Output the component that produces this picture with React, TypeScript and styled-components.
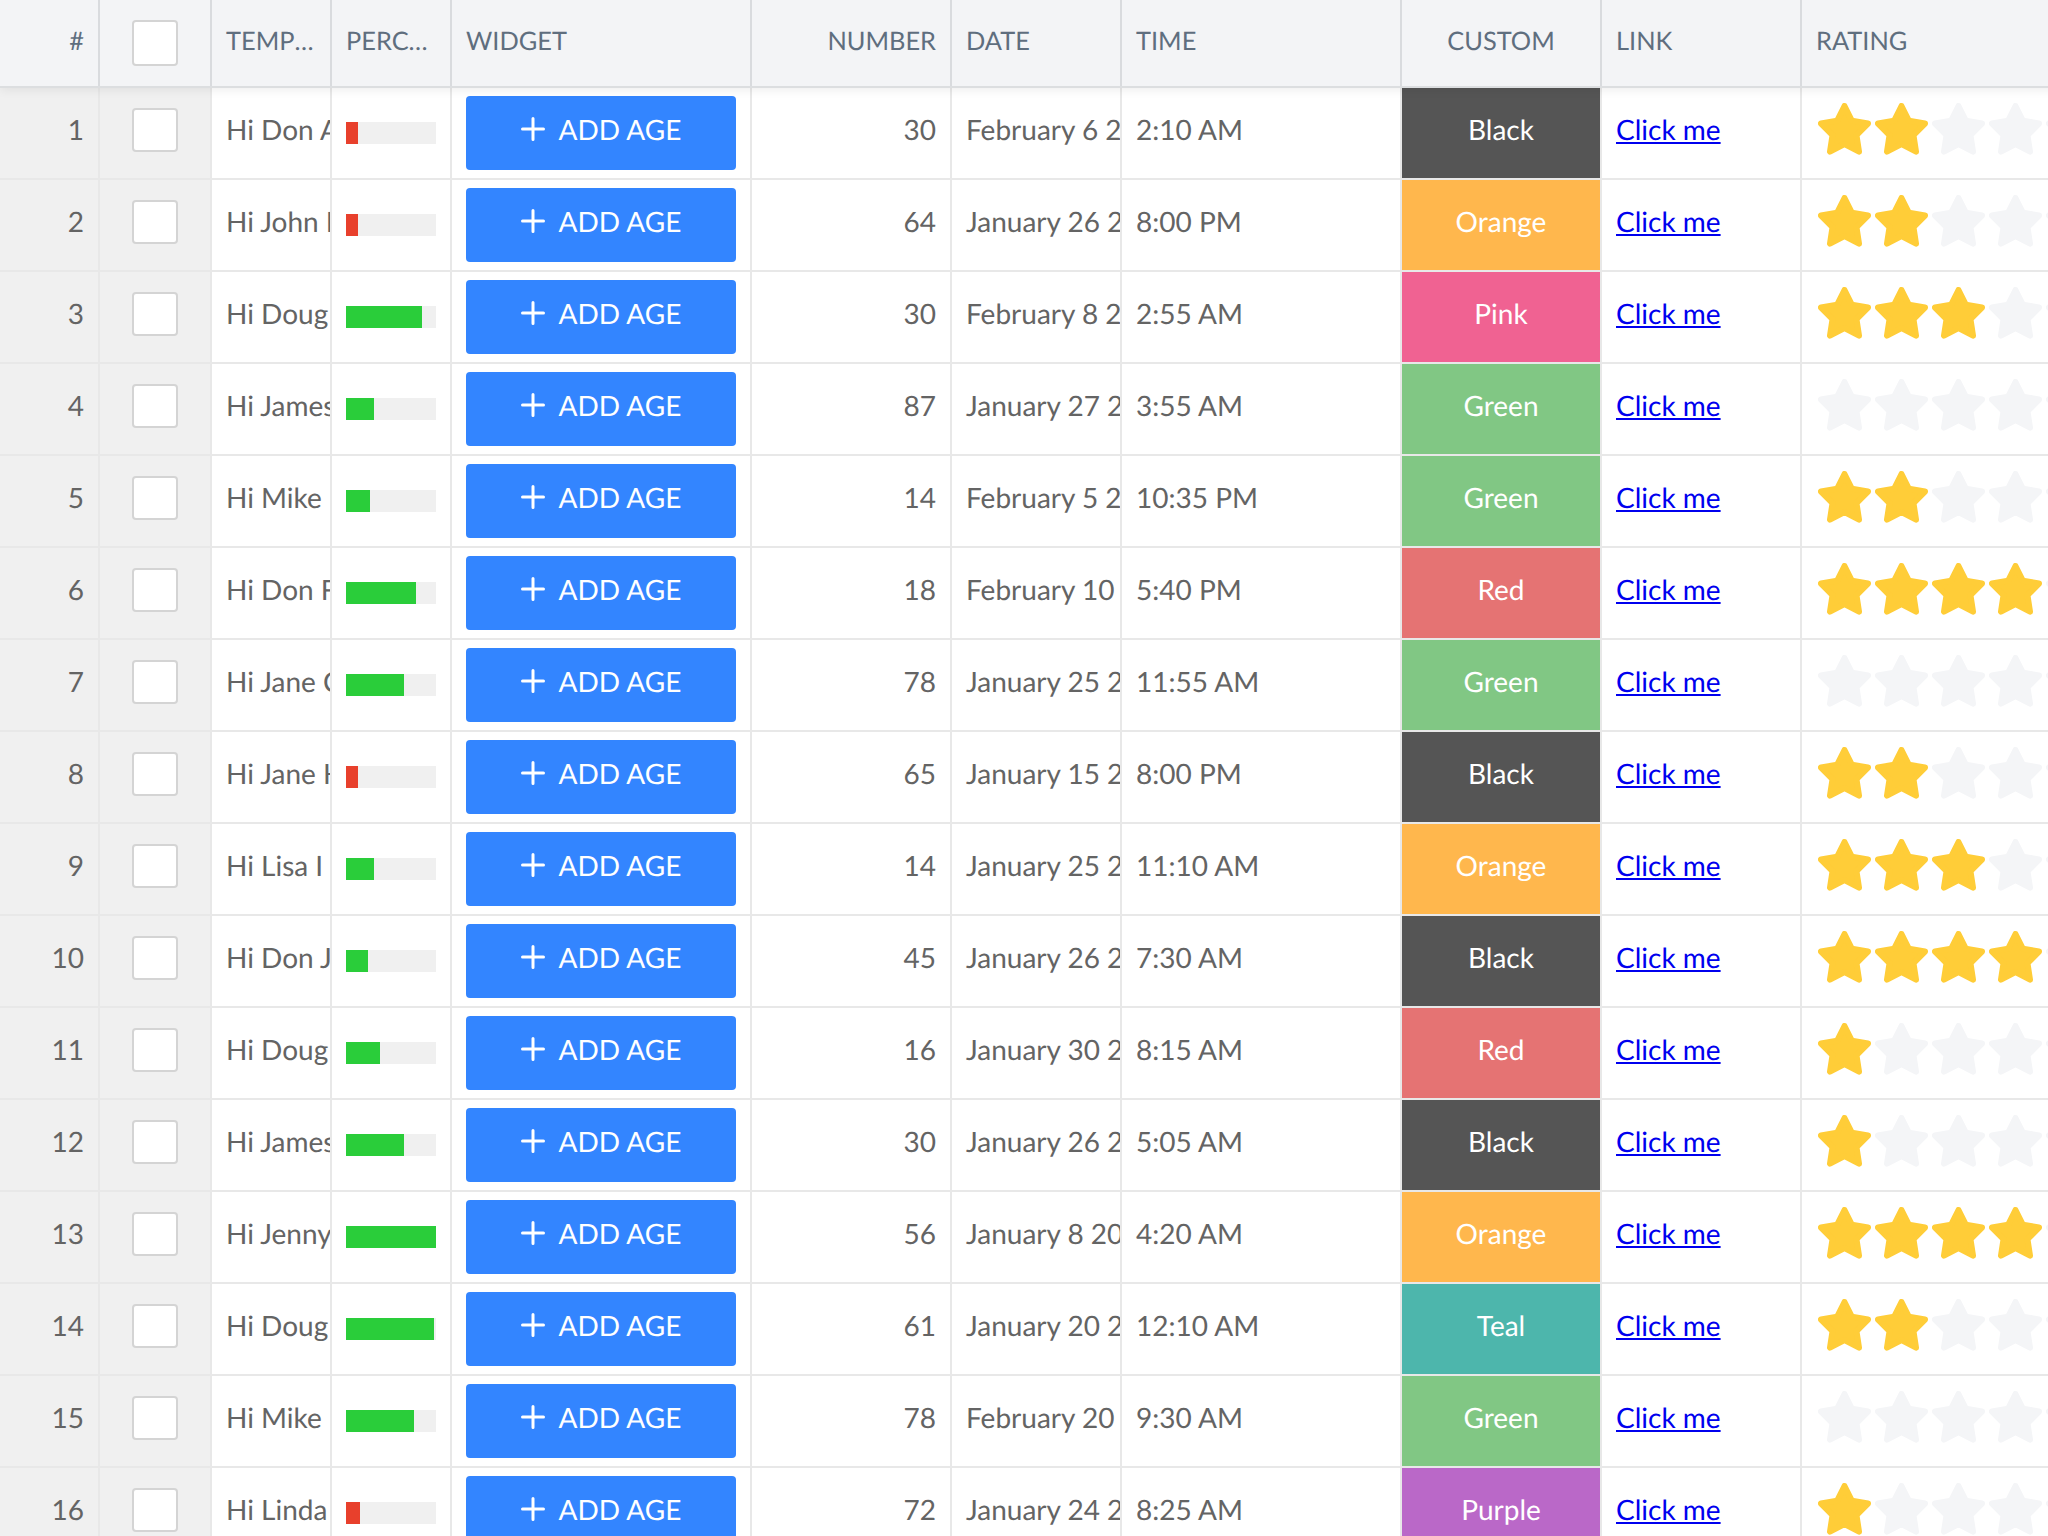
import React from "react";
import styled, { createGlobalStyle } from "styled-components";

type ColorName = "Black" | "Orange" | "Pink" | "Green" | "Red" | "Teal" | "Purple";

interface Row {
  name: string;
  percent: number;
  number: number;
  date: string;
  time: string;
  custom: ColorName;
  rating: number;
}

const rows: Row[] = [
  { name: "Hi Don Allen", percent: 12, number: 30, date: "February 6 2019", time: "2:10 AM", custom: "Black", rating: 2 },
  { name: "Hi John Irwin", percent: 12, number: 64, date: "January 26 2019", time: "8:00 PM", custom: "Orange", rating: 2 },
  { name: "Hi Doug Hill", percent: 76, number: 30, date: "February 8 2019", time: "2:55 AM", custom: "Pink", rating: 3 },
  { name: "Hi James Ford", percent: 28, number: 87, date: "January 27 2019", time: "3:55 AM", custom: "Green", rating: 0 },
  { name: "Hi Mike", percent: 24, number: 14, date: "February 5 2019", time: "10:35 PM", custom: "Green", rating: 2 },
  { name: "Hi Don Ford", percent: 70, number: 18, date: "February 10 2019", time: "5:40 PM", custom: "Red", rating: 4 },
  { name: "Hi Jane Cole", percent: 58, number: 78, date: "January 25 2019", time: "11:55 AM", custom: "Green", rating: 0 },
  { name: "Hi Jane Hill", percent: 12, number: 65, date: "January 15 2019", time: "8:00 PM", custom: "Black", rating: 2 },
  { name: "Hi Lisa I", percent: 28, number: 14, date: "January 25 2019", time: "11:10 AM", custom: "Orange", rating: 3 },
  { name: "Hi Don Jones", percent: 22, number: 45, date: "January 26 2019", time: "7:30 AM", custom: "Black", rating: 4 },
  { name: "Hi Doug Hill", percent: 34, number: 16, date: "January 30 2019", time: "8:15 AM", custom: "Red", rating: 1 },
  { name: "Hi James Ford", percent: 58, number: 30, date: "January 26 2019", time: "5:05 AM", custom: "Black", rating: 1 },
  { name: "Hi Jenny Hill", percent: 90, number: 56, date: "January 8 2019", time: "4:20 AM", custom: "Orange", rating: 4 },
  { name: "Hi Doug Hill", percent: 88, number: 61, date: "January 20 2019", time: "12:10 AM", custom: "Teal", rating: 2 },
  { name: "Hi Mike", percent: 68, number: 78, date: "February 20 2019", time: "9:30 AM", custom: "Green", rating: 0 },
  { name: "Hi Linda", percent: 14, number: 72, date: "January 24 2019", time: "8:25 AM", custom: "Purple", rating: 1 },
];

const customColors: Record<ColorName, string> = {
  Black: "#555555",
  Orange: "#ffb74d",
  Pink: "#f06292",
  Green: "#81c784",
  Red: "#e57373",
  Teal: "#4db6ac",
  Purple: "#ba68c8",
};

const columns = "100px 112px 120px 120px 300px 200px 170px 280px 200px 200px 300px";

const GlobalStyle = createGlobalStyle`
  html, body {
    margin: 0;
    padding: 0;
    height: 100%;
    overflow: hidden;
    background: #ffffff;
  }

  body {
    font-family: Lato, "Liberation Sans", sans-serif;
    text-rendering: geometricPrecision;
  }
`;

const Grid = styled.div`
  width: 2102px;
  height: 1536px;
  overflow: hidden;
`;

const HeaderRow = styled.div`
  position: relative;
  z-index: 1;
  display: grid;
  grid-template-columns: ${columns};
  height: 88px;
  box-sizing: border-box;
  background: #f3f4f6;
  border-bottom: 2px solid #dcdee0;
  box-shadow: 0 2px 10px rgba(0, 0, 0, 0.07);
`;

const HeaderCell = styled.div<{ $align?: string }>`
  box-sizing: border-box;
  padding: 0 14px 4px;
  border-right: 2px solid #d9dbde;
  font-size: 25.4px;
  line-height: 83px;
  color: #5f6e7e;
  text-align: ${(p) => p.$align || "left"};
  white-space: nowrap;
  overflow: hidden;
  text-overflow: ellipsis;
`;

const HeaderCheckCell = styled.div`
  display: flex;
  justify-content: center;
  box-sizing: border-box;
  padding-top: 20px;
  border-right: 2px solid #d9dbde;
`;

const BodyRow = styled.div`
  display: grid;
  grid-template-columns: ${columns};
  height: 92px;
  box-sizing: border-box;
  border-bottom: 2px solid #e8e8e8;
`;

const Cell = styled.div<{ $align?: string }>`
  box-sizing: border-box;
  padding-left: 14px;
  padding-right: ${(p) => (p.$align === "right" ? "14px" : "0")};
  border-right: 2px solid #e8e8e8;
  font-size: 28px;
  line-height: 82px;
  color: #646464;
  text-align: ${(p) => p.$align || "left"};
  white-space: nowrap;
  overflow: hidden;
`;

const PinnedCell = styled(Cell)`
  background: #f0f0f0;
`;

const CheckCell = styled.div`
  display: flex;
  justify-content: center;
  box-sizing: border-box;
  padding-top: 20px;
  background: #f0f0f0;
  border-right: 2px solid #e8e8e8;
`;

const CheckBox = styled.input<{ $tall?: boolean }>`
  appearance: none;
  display: block;
  margin: 0;
  width: 46px;
  height: ${(p) => (p.$tall ? "46px" : "44px")};
  box-sizing: border-box;
  background: #ffffff;
  border: 2px solid #d4d4d4;
  border-radius: 4px;
`;

const BarCell = styled.div`
  display: flex;
  align-items: center;
  box-sizing: border-box;
  padding: 0 14px;
  border-right: 2px solid #e8e8e8;
`;

const BarTrack = styled.div`
  flex: 1;
  height: 22px;
  background: #f0f0f0;
`;

const BarFill = styled.div<{ $low: boolean }>`
  height: 100%;
  background: ${(p) => (p.$low ? "#e8402c" : "#2acd3a")};
`;

const ButtonCell = styled.div`
  display: flex;
  box-sizing: border-box;
  padding: 8px 14px;
  border-right: 2px solid #e8e8e8;
`;

const AddButton = styled.button`
  display: flex;
  justify-content: center;
  align-items: center;
  gap: 14px;
  flex: 1;
  padding: 0 0 8px;
  border: 0;
  border-radius: 4px;
  background: #3385ff;
  color: #ffffff;
  font-family: inherit;
  font-size: 28px;
  text-rendering: inherit;
`;

const PlusIcon = styled.svg`
  width: 24px;
  height: 24px;
  flex: none;
`;

const CustomCell = styled.div<{ $color: string }>`
  box-sizing: border-box;
  background: ${(p) => p.$color};
  border-right: 2px solid #e8e8e8;
  font-size: 28px;
  line-height: 82px;
  color: #ffffff;
  text-align: center;
`;

const ClickLink = styled.a`
  color: #0000ee;
  text-decoration: underline;
`;

const RatingCell = styled.div`
  display: flex;
  gap: 4px;
  box-sizing: border-box;
  padding: 15px 0 0 16px;
  overflow: hidden;
`;

const Star = styled.svg<{ $on: boolean }>`
  width: 53px;
  height: 52px;
  flex: none;
  fill: ${(p) => (p.$on ? "#ffcd38" : "#f4f5f7")};
  stroke: ${(p) => (p.$on ? "#ffcd38" : "#f4f5f7")};
  stroke-width: 6;
  stroke-linejoin: round;
`;

const starPoints =
  "26.5,3 33.91,17.51 49.99,20.07 38.48,31.59 41.02,47.68 26.5,40.3 11.98,47.68 14.52,31.59 3.01,20.07 19.09,17.51";

function Stars({ value }: { value: number }) {
  return (
    <RatingCell>
      {[0, 1, 2, 3, 4].map((i) => (
        <Star key={i} $on={i < value} viewBox="0 0 53 51" preserveAspectRatio="none">
          <polygon points={starPoints} />
        </Star>
      ))}
    </RatingCell>
  );
}

export default function App() {
  return (
    <>
      <GlobalStyle />
      <Grid>
        <HeaderRow>
          <HeaderCell $align="right">#</HeaderCell>
          <HeaderCheckCell>
            <CheckBox type="checkbox" $tall />
          </HeaderCheckCell>
          <HeaderCell>TEMPLATE</HeaderCell>
          <HeaderCell>PERCENT</HeaderCell>
          <HeaderCell>WIDGET</HeaderCell>
          <HeaderCell $align="right">NUMBER</HeaderCell>
          <HeaderCell>DATE</HeaderCell>
          <HeaderCell>TIME</HeaderCell>
          <HeaderCell $align="center">CUSTOM</HeaderCell>
          <HeaderCell>LINK</HeaderCell>
          <HeaderCell>RATING</HeaderCell>
        </HeaderRow>
        {rows.map((row, index) => (
          <BodyRow key={index}>
            <PinnedCell $align="right">{index + 1}</PinnedCell>
            <CheckCell>
              <CheckBox type="checkbox" />
            </CheckCell>
            <Cell>{row.name}</Cell>
            <BarCell>
              <BarTrack>
                <BarFill $low={row.percent < 20} style={{ width: `${row.percent}px` }} />
              </BarTrack>
            </BarCell>
            <ButtonCell>
              <AddButton>
                <PlusIcon viewBox="0 0 24 24" fill="none" stroke="#ffffff" strokeWidth="3" strokeLinecap="round">
                  <path d="M12 1.5v21M1.5 12h21" />
                </PlusIcon>
                ADD AGE
              </AddButton>
            </ButtonCell>
            <Cell $align="right">{row.number}</Cell>
            <Cell>{row.date}</Cell>
            <Cell>{row.time}</Cell>
            <CustomCell $color={customColors[row.custom]}>{row.custom}</CustomCell>
            <Cell>
              <ClickLink href="#">Click me</ClickLink>
            </Cell>
            <Stars value={row.rating} />
          </BodyRow>
        ))}
      </Grid>
    </>
  );
}
